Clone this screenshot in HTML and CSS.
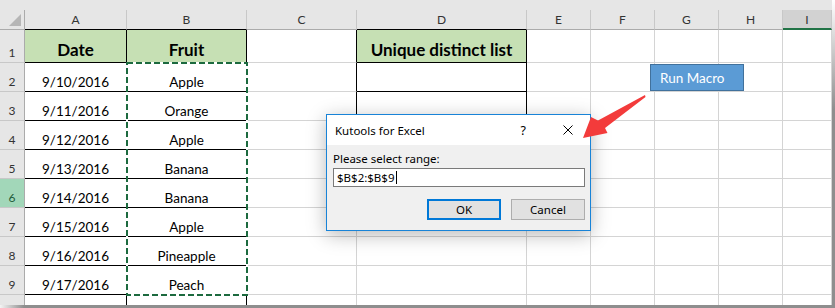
FILE: index.html
```html
<!DOCTYPE html>
<html lang="en">
<head>
    <meta charset="UTF-8" />
    <title>Unique distinct list - Kutools</title>
    <link rel="stylesheet" href="styles.css">
</head>
<body>
<div class="screen">
    <div class="sheet">
        <div class="grid">
            <div class="strip"></div>

            <div class="ch corner"><span class="tri"></span></div>
            <div class="ch kb">A</div>
            <div class="ch kb">B</div>
            <div class="ch">C</div>
            <div class="ch kb">D</div>
            <div class="ch">E</div>
            <div class="ch">F</div>
            <div class="ch">G</div>
            <div class="ch">H</div>
            <div class="ch sel">I</div>

            <div class="rh">1</div>
            <div class="c hd kr kb">Date</div>
            <div class="c hd kr kb">Fruit</div>
            <div class="c kr"></div>
            <div class="c hd kr kb">Unique distinct list</div>
            <div class="c"></div><div class="c"></div><div class="c"></div><div class="c"></div><div class="c"></div>

            <div class="rh">2</div>
            <div class="c kr kb">9/10/2016</div>
            <div class="c kr kb">Apple</div>
            <div class="c kr"></div>
            <div class="c kr kb"></div>
            <div class="c"></div><div class="c"></div><div class="c"></div><div class="c"></div><div class="c"></div>

            <div class="rh">3</div>
            <div class="c kr kb">9/11/2016</div>
            <div class="c kr kb">Orange</div>
            <div class="c kr"></div>
            <div class="c kr kb"></div>
            <div class="c"></div><div class="c"></div><div class="c"></div><div class="c"></div><div class="c"></div>

            <div class="rh">4</div>
            <div class="c kr kb">9/12/2016</div>
            <div class="c kr kb">Apple</div>
            <div class="c"></div>
            <div class="c"></div>
            <div class="c"></div><div class="c"></div><div class="c"></div><div class="c"></div><div class="c"></div>

            <div class="rh">5</div>
            <div class="c kr kb">9/13/2016</div>
            <div class="c kr kb">Banana</div>
            <div class="c"></div>
            <div class="c"></div>
            <div class="c"></div><div class="c"></div><div class="c"></div><div class="c"></div><div class="c"></div>

            <div class="rh on">6</div>
            <div class="c kr kb">9/14/2016</div>
            <div class="c kr kb">Banana</div>
            <div class="c"></div>
            <div class="c"></div>
            <div class="c"></div><div class="c"></div><div class="c"></div><div class="c"></div><div class="c"></div>

            <div class="rh">7</div>
            <div class="c kr kb">9/15/2016</div>
            <div class="c kr kb">Apple</div>
            <div class="c"></div>
            <div class="c"></div>
            <div class="c"></div><div class="c"></div><div class="c"></div><div class="c"></div><div class="c"></div>

            <div class="rh">8</div>
            <div class="c kr kb">9/16/2016</div>
            <div class="c kr kb">Pineapple</div>
            <div class="c"></div>
            <div class="c"></div>
            <div class="c"></div><div class="c"></div><div class="c"></div><div class="c"></div><div class="c"></div>

            <div class="rh">9</div>
            <div class="c kr kb">9/17/2016</div>
            <div class="c kr kb">Peach</div>
            <div class="c"></div>
            <div class="c"></div>
            <div class="c"></div><div class="c"></div><div class="c"></div><div class="c"></div><div class="c"></div>

            <div class="rh">10</div>
            <div class="c kr"></div>
            <div class="c kr"></div>
            <div class="c"></div>
            <div class="c"></div>
            <div class="c"></div><div class="c"></div><div class="c"></div><div class="c"></div><div class="c"></div>

            <!-- copy marquee round B2:B9 -->
            <div class="marquee">
                <svg width="122" height="234">
                    <rect class="under" x="1" y="1" width="120" height="232" />
                    <rect class="ants" x="1" y="1" width="120" height="232" />
                </svg>
            </div>
        </div>

        <div class="macro">Run Macro</div>

        <div class="dialog">
            <div class="titlebar">
                <span class="title">Kutools for Excel</span>
                <span class="help">?</span>
                <svg class="close" viewBox="0 0 10 10">
                    <path d="M0.5 0.5 L9.5 9.5 M9.5 0.5 L0.5 9.5" />
                </svg>
            </div>
            <div class="dlg-body">
                <div class="label">Please select range:</div>
                <div class="field">$B$2:$B$9<span class="caret"></span></div>
                <div class="actions">
                    <button class="btn primary">OK</button>
                    <button class="btn">Cancel</button>
                </div>
            </div>
        </div>

        <svg class="arrow" width="832" height="305">
            <polygon points="645,95 598,120.5 591,117 583,138 607.5,133 605,128 645.5,97" />
        </svg>
    </div>
    <div class="shade-r"></div>
    <div class="shade-b"></div>
    <div class="shade-c"></div>
</div>
</body>
</html>
```

FILE: styles.css
```css
* {
    box-sizing: border-box;
}
body {
    margin: 0;
    background: #fff;
    font-family: Lato, "Liberation Sans", sans-serif;
}
.screen {
    display: grid;
    grid-template-columns: 832px 3px;
    grid-template-rows: 305px 3px;
}
.sheet {
    position: relative;
    overflow: hidden;
    background: #fff;
}
.shade-r {
    background: linear-gradient(to bottom, #fff 0, #8e8e8e 110px);
}
.shade-b {
    background: linear-gradient(to right, #f4f4f4 0, #8e8e8e 24px);
}
.shade-c {
    background: #8e8e8e;
}

/* spreadsheet */
.grid {
    position: relative;
    display: grid;
    grid-template-columns: 25px 102px 120px 110px 170px 64px 64px 64px 64px 49px;
    grid-template-rows: 10px 20px 33px repeat(9, 29px);
}
.strip {
    grid-column: 1 / -1;
    background: #e6e6e6;
}
.ch {
    background: #e6e6e6;
    border-right: 1px solid #c8c8c8;
    border-bottom: 1px solid #ababab;
    display: flex;
    align-items: center;
    justify-content: center;
    font-size: 12px;
    color: #333;
}
.ch.sel {
    background: #d2d2d2;
    border-bottom: 2px solid #217346;
}
.corner {
    position: relative;
    border-right-color: #ababab;
}
.corner .tri {
    position: absolute;
    right: 3px;
    bottom: 3px;
    width: 0;
    height: 0;
    border-left: 12px solid transparent;
    border-bottom: 12px solid #b6b6b6;
}
.rh {
    background: #e6e6e6;
    border-right: 1px solid #ababab;
    border-bottom: 1px solid #c8c8c8;
    display: flex;
    align-items: flex-end;
    justify-content: center;
    padding-bottom: 1px;
    font-size: 12px;
    line-height: 16px;
    color: #333;
}
.rh.on {
    background: #a2d7b9;
    color: #1d5b38;
}
.c {
    border-right: 1px solid #d4d4d4;
    border-bottom: 1px solid #d4d4d4;
    display: flex;
    align-items: flex-end;
    justify-content: center;
    padding-bottom: 1px;
    font-size: 13.5px;
    line-height: 16px;
    color: #000;
}
.c.hd {
    background: #c6e0b4;
    font-weight: 700;
    font-size: 17px;
    line-height: 20px;
    padding-bottom: 2px;
}
.kr {
    border-right-color: #000;
}
.kb {
    border-bottom-color: #000;
}
/* absolute child of the grid: its box is the B2:B9 grid area */
.marquee {
    position: absolute;
    grid-column: 3;
    grid-row: 4 / 12;
    top: -1px;
    left: -1px;
}
.marquee svg {
    display: block;
}
.marquee rect {
    fill: none;
    stroke-width: 2;
    shape-rendering: crispEdges;
}
.marquee .under {
    stroke: #fff;
}
.marquee .ants {
    stroke: #1c6a3f;
    stroke-dasharray: 6 3;
}

/* floating shape */
.macro {
    position: absolute;
    left: 650px;
    top: 64px;
    width: 94px;
    height: 27px;
    background: #5b9bd5;
    border: 1px solid #41719c;
    color: #fff;
    font-size: 13.5px;
    display: flex;
    align-items: center;
    padding-left: 9px;
}

/* dialog */
.dialog {
    position: absolute;
    left: 326px;
    top: 114px;
    width: 265px;
    height: 117px;
    border: 1px solid #1883d7;
    background: #f0f0f0;
    box-shadow: 0 4px 18px rgba(0, 0, 0, 0.28);
    font-family: "Noto Sans", "Open Sans", sans-serif;
    font-size: 11.5px;
    color: #000;
    display: flex;
    flex-direction: column;
}
.titlebar {
    height: 30px;
    background: #fff;
    display: flex;
    align-items: center;
    padding-left: 8px;
}
.title {
    flex: 1;
}
.help {
    font-size: 12.5px;
    margin-right: 37px;
}
.close {
    width: 10px;
    height: 10px;
    margin-right: 17px;
}
.close path {
    stroke: #000;
    stroke-width: 1;
    fill: none;
}
.dlg-body {
    padding: 6px 5px 10px 6px;
}
.label {
    line-height: 16px;
}
.field {
    margin-top: 1px;
    height: 19px;
    background: #fff;
    border: 1px solid #7a7a7a;
    padding-left: 3px;
    display: flex;
    align-items: center;
}
.caret {
    width: 1px;
    height: 13px;
    background: #000;
    margin-left: 1px;
}
.actions {
    margin-top: 12px;
    display: flex;
    justify-content: flex-end;
    gap: 10px;
}
.btn {
    width: 74px;
    height: 21px;
    margin: 0;
    padding: 0;
    background: #e1e1e1;
    border: 1px solid #adadad;
    font-family: inherit;
    font-size: 11.5px;
    color: #000;
}
.btn.primary {
    border: 2px solid #0078d7;
}

.arrow {
    position: absolute;
    left: 0;
    top: 0;
    pointer-events: none;
}
.arrow polygon {
    fill: #f33b3b;
}
```
